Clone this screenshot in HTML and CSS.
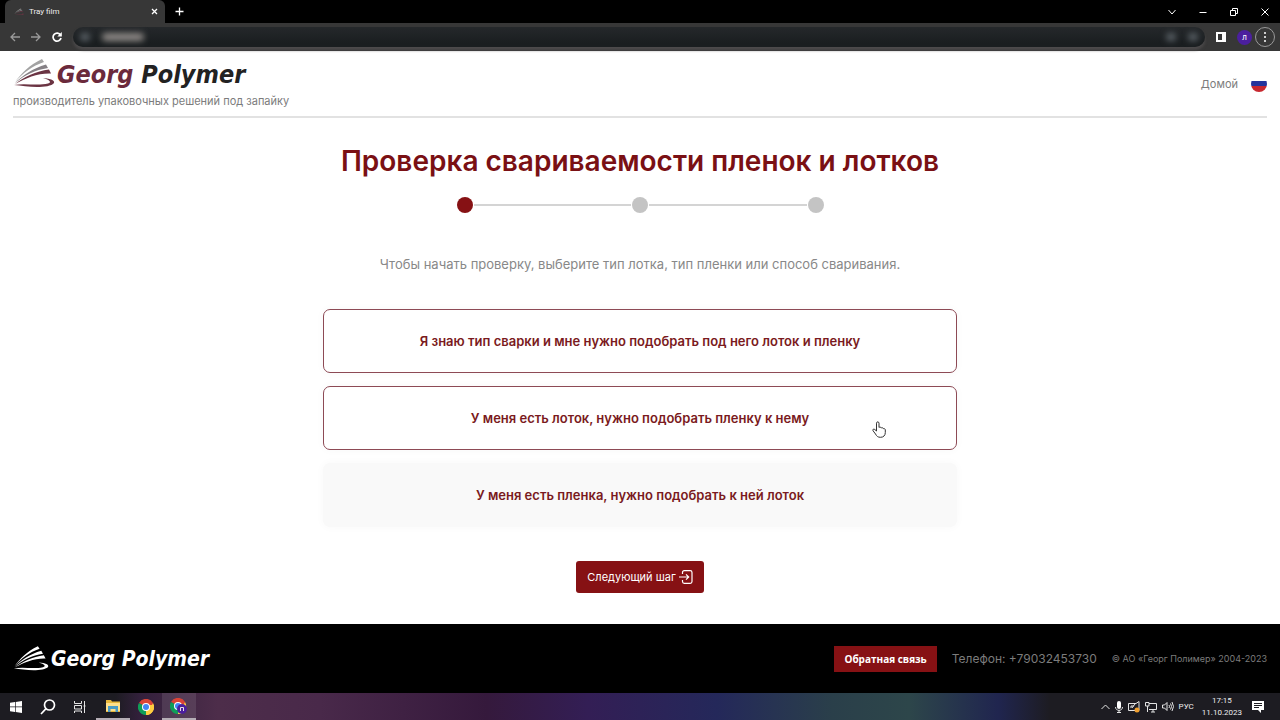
FILE: index.html
```html
<!DOCTYPE html>
<html lang="ru">
<head>
  <meta charset="UTF-8">
  <meta name="viewport" content="width=device-width, initial-scale=1.0">
  <title>Tray film</title>
  <link rel="stylesheet" href="styles.css">
</head>
<body>

  <!-- Logo shape, shared by header, footer and tab -->
  <svg class="defs" width="0" height="0" aria-hidden="true">
    <symbol id="mark" viewBox="0 0 42 30">
      <path class="m1" d="M2 23C8 15 16 6 29 0L31 3C19 7 10 14 2 23Z"/>
      <path class="m2" d="M2 24C9 17 20 9 33 5.500L35 9C22 11 12 16 2 24Z"/>
      <path class="m3" d="M2 25C11 18 23 12 36 10.500L38 14.500C25 14 13 19 2 25Z"/>
      <path class="m4" d="M1 26C12 24 25 27 35 24.500C39 23.500 37 21 30 19C38 19.500 42 21.500 41 24C39 27 31 28 24 28C16 28 8 26.500 1 26Z"/>
    </symbol>
  </svg>

  <!-- Browser window -->
  <div class="titlebar">
    <div class="tab">
      <svg class="mark-tab" width="10" height="8"><use href="#mark"/></svg>
      <span class="tab-name">Tray film</span>
      <button class="icon-btn" aria-label="Закрыть вкладку">
        <svg width="7" height="7" viewBox="0 0 7 7"><path d="M1 1L6 6M6 1L1 6"/></svg>
      </button>
    </div>
    <button class="icon-btn new-tab" aria-label="Новая вкладка">
      <svg width="9" height="9" viewBox="0 0 9 9"><path d="M4.500 .5V8.500M.5 4.500H8.500"/></svg>
    </button>
    <div class="window-buttons">
      <button class="icon-btn" aria-label="Поиск вкладок"><svg width="8" height="8" viewBox="0 0 8 8"><path class="thin" d="M.5 2L4 6L7.500 2"/></svg></button>
      <button class="icon-btn" aria-label="Свернуть"><svg width="8" height="8" viewBox="0 0 8 8"><path class="thin" d="M.5 4.500H7.500"/></svg></button>
      <button class="icon-btn" aria-label="Восстановить"><svg width="8" height="8" viewBox="0 0 8 8"><path class="thin" d="M.5 2.500H5.500V7.500H.5ZM2.500 2.500V.5H7.500V5.500H5.500"/></svg></button>
      <button class="icon-btn" aria-label="Закрыть"><svg width="8" height="8" viewBox="0 0 8 8"><path class="thin" d="M.5 .5L7.500 7.500M7.500 .5L.5 7.500"/></svg></button>
    </div>
  </div>

  <div class="toolbar">
    <button class="icon-btn dim" aria-label="Назад"><svg width="10" height="10" viewBox="0 0 10 10"><path d="M10 5H1M5 1L1 5L5 9"/></svg></button>
    <button class="icon-btn dim" aria-label="Вперед"><svg width="10" height="10" viewBox="0 0 10 10"><path d="M0 5H9M5 1L9 5L5 9"/></svg></button>
    <button class="icon-btn" aria-label="Обновить"><svg width="10" height="10" viewBox="0 0 10 10"><path class="bold" d="M8.500 3A4 4 0 1 0 9 6"/><path class="fill" d="M9.800 0V4.500H5.300Z"/></svg></button>
    <div class="address">
      <span class="smudge dot"></span>
      <span class="smudge url"></span>
      <span class="smudge dot right"></span>
      <span class="smudge dot"></span>
    </div>
    <button class="icon-btn" aria-label="Боковая панель"><svg width="10" height="10" viewBox="0 0 10 10"><path class="fill" fill-rule="evenodd" d="M0 0H10V10H0ZM2 2V8H6V2Z"/></svg></button>
    <button class="avatar" aria-label="Профиль">л</button>
    <button class="menu-btn" aria-label="Меню"><svg width="4" height="12" viewBox="0 0 4 12"><circle cx="2" cy="2" r="1"/><circle cx="2" cy="6" r="1"/><circle cx="2" cy="10" r="1"/></svg></button>
  </div>

  <!-- Site -->
  <header class="header">
    <div>
      <a href="#" class="logo">
        <svg class="mark" width="42" height="30"><use href="#mark"/></svg>
        <span class="logo-text"><span class="logo-georg">Georg</span> Polymer</span>
      </a>
      <p class="tagline">производитель упаковочных решений под запайку</p>
    </div>
    <nav class="nav">
      <a href="#">Домой</a>
      <button class="flag" aria-label="Русский язык"></button>
    </nav>
  </header>

  <main class="main">
    <h1>Проверка свариваемости пленок и лотков</h1>
    <div class="steps">
      <span class="step active"></span>
      <span class="line"></span>
      <span class="step"></span>
      <span class="line"></span>
      <span class="step"></span>
    </div>
    <p class="hint">Чтобы начать проверку, выберите тип лотка, тип пленки или способ сваривания.</p>
    <div class="options">
      <button class="option">Я знаю тип сварки и мне нужно подобрать под него лоток и пленку</button>
      <button class="option">У меня есть лоток, нужно подобрать пленку к нему
        <svg class="cursor" width="14" height="17" viewBox="0 0 14 17"><path d="M4.500 10V2.200C4.500 .4 7 .4 7 2.200V6.500C7.500 5.800 9 6 9.200 7C10 6.400 11.200 6.700 11.400 7.700C12.200 7.300 13.300 7.800 13.300 9V11.500C13.300 14.500 11.500 16.300 8.500 16.300C5.800 16.300 4.800 15.300 3.500 13L1 9.700C.3 8.500 1.700 7.500 2.800 8.500Z"/></svg>
      </button>
      <button class="option plain">У меня есть пленка, нужно подобрать к ней лоток</button>
    </div>
    <button class="next">
      Следующий шаг
      <svg width="14" height="14" viewBox="0 0 14 14"><path d="M3.500 4V2.500Q3.500 .7 5.300 .7H11.200Q13 .7 13 2.500V11.500Q13 13.300 11.200 13.300H5.300Q3.500 13.300 3.500 11.500V10M0 7H9.500M7 4.300L9.700 7L7 9.700"/></svg>
    </button>
  </main>

  <footer class="footer">
    <a href="#" class="logo logo-white">
      <svg class="mark" width="36" height="26"><use href="#mark"/></svg>
      <span class="logo-text">Georg Polymer</span>
    </a>
    <div class="contacts">
      <button class="feedback">Обратная связь</button>
      <span class="phone">Телефон: +79032453730</span>
      <span class="copy">© АО «Георг Полимер» 2004-2023</span>
    </div>
  </footer>

  <!-- Windows taskbar -->
  <div class="taskbar">
    <button class="task" aria-label="Пуск"><svg width="12" height="12" viewBox="0 0 12 12"><path class="fill" d="M0 1.800L5 1.100V5.600H0ZM5.700 1L12 0V5.600H5.700ZM0 6.300H5V10.900L0 10.200ZM5.700 6.300H12V12L5.700 11Z"/></svg></button>
    <button class="task" aria-label="Поиск"><svg width="16" height="16" viewBox="0 0 16 16"><circle class="stroke" cx="9.500" cy="6" r="5"/><path class="stroke" d="M6 9.700L1 15"/></svg></button>
    <button class="task" aria-label="Представление задач"><svg width="12" height="12" viewBox="0 0 12 12"><path class="line-icon" d="M.5 0V2.500H7.500V0M.5 4.500H7.500V8H.5ZM.5 12V10H7.500V12M10.500 0V12M9.500 5H11.500"/></svg></button>
    <button class="task open" aria-label="Проводник"><svg width="14" height="12" viewBox="0 0 14 12"><path fill="#e8b83c" d="M0 0H5L6 1.500H14V12H0Z"/><path fill="#ffe08a" d="M0 3H14V11H0Z"/><path fill="#4a9bc4" d="M2 6H12V12H9.500V9H4.500V12H2Z"/></svg></button>
    <button class="task" aria-label="Chrome">
      <svg width="16" height="16" viewBox="0 0 16 16"><g id="chrome"><path fill="#db4437" d="M8 8L1 4A8 8 0 0 1 15 4Z"/><path fill="#ffcd40" d="M8 8L15 4A8 8 0 0 1 8 16Z"/><path fill="#0f9d58" d="M8 8L8 16A8 8 0 0 1 1 4Z"/><path fill="#db4437" d="M8 4H15L13 8H8Z"/><path fill="#ffcd40" d="M11.500 6H15.700A8 8 0 0 1 8 16L11.500 10Z"/><circle cx="8" cy="8" r="4" fill="#fff"/><circle cx="8" cy="8" r="3" fill="#4285f4"/></g></svg>
    </button>
    <button class="task open current" aria-label="Tray film">
      <svg width="18" height="16" viewBox="0 0 18 16"><use href="#chrome"/><circle cx="12" cy="11" r="5" fill="#4b1f9e"/><path class="line-icon" d="M10.500 13V9.500H13.500V13"/></svg>
    </button>

    <div class="tray">
      <svg width="9" height="6" viewBox="0 0 9 6"><path class="line-icon" d="M.5 5L4.500 1L8.500 5"/></svg>
      <svg width="8" height="12" viewBox="0 0 8 12"><rect class="fill" x="2" y="0" width="4" height="8" rx="2"/><path class="line-icon" d="M.5 6C.5 10.500 7.500 10.500 7.500 6M4 9V12M2 11.500H6"/></svg>
      <svg width="12" height="12" viewBox="0 0 12 12"><path class="line-icon" d="M.5 2.500H8L11 .5V9.500H.5ZM3 7V5H6M7 3L4 7"/><circle cx="9" cy="9" r="2.500" fill="#f0a030"/></svg>
      <svg width="12" height="12" viewBox="0 0 12 12"><path class="line-icon" d="M4 2.500H11.500V8.500H4M6 11H10M8 8.500V11M.5 1.500H4V5H.5ZM2.500 5V11"/></svg>
      <svg width="12" height="11" viewBox="0 0 12 11"><path class="line-icon" d="M.5 4H2.500L5 1.500V9.500L2.500 7H.5ZM7 4Q8 5.500 7 7M8.500 2.500Q10.500 5.500 8.500 8.500M10 1Q13 5.500 10 10"/></svg>
      <span class="lang">РУС</span>
      <div class="clock">
        <time>17:15</time>
        <time>11.10.2023</time>
      </div>
      <svg class="notes" width="12" height="12" viewBox="0 0 12 12"><path class="fill" d="M0 0H12V9H9V12L6 9H0Z"/><path stroke="#1d1c22" d="M2 2.500H10M2 4.500H10M2 6.500H7"/></svg>
    </div>
  </div>

</body>
</html>
```
FILE: styles.css
```css
* {
  box-sizing: border-box;
}

body {
  margin: 0;
  min-height: 100vh;
  display: flex;
  flex-direction: column;
  background-color: #fff;
  font-family: Inter, sans-serif;
}

button {
  border: none;
  padding: 0;
  background: none;
  font-family: inherit;
  cursor: pointer;
}

a {
  color: inherit;
  text-decoration: none;
}

h1, p {
  margin: 0;
}

svg {
  display: block;
  flex-shrink: 0;
}

.defs {
  position: absolute;
}

/* Browser window */
.titlebar {
  display: flex;
  align-items: center;
  height: 23px;
  background-color: #000;
}

.tab {
  display: flex;
  align-items: center;
  align-self: stretch;
  width: 160px;
  margin-left: 5px;
  padding: 0 7px 0 9px;
  border-radius: 6px 6px 0 0;
  background-color: #373737;
}

.mark-tab {
  fill: #a0616c;
}

.tab-name {
  flex: 1;
  margin-left: 5px;
  color: #eee;
  font-family: Roboto, sans-serif;
  font-size: 8px;
}

.icon-btn path {
  fill: none;
  stroke: #fff;
  stroke-width: 1.3;
}

.icon-btn .thin {
  stroke-width: 1;
}

.icon-btn .bold {
  stroke-width: 1.7;
}

.icon-btn .fill {
  fill: #fff;
  stroke: none;
}

.icon-btn.dim path {
  stroke: #999;
}

.new-tab {
  margin-left: 10px;
}

.window-buttons {
  display: flex;
  gap: 23px;
  margin-left: auto;
  padding: 0 11px;
}

.toolbar {
  display: flex;
  align-items: center;
  gap: 11px;
  height: 28px;
  padding: 0 5px 0 10px;
  background-color: #373737;
}

.address {
  flex: 1;
  display: flex;
  align-items: center;
  gap: 12px;
  height: 20px;
  padding: 0 7px;
  border-radius: 10px;
  background: linear-gradient(#25282b, #1a1e20 80%);
  box-shadow: 0 3px 3px #4d4b4c;
}

.smudge {
  height: 8px;
  border-radius: 4px;
  background-color: #8f8a87;
  filter: blur(3px);
}

.dot {
  width: 10px;
  background-color: #5a6167;
}

.url {
  width: 42px;
}

.right {
  margin-left: auto;
}

.avatar {
  width: 15px;
  height: 15px;
  border-radius: 50%;
  background-color: #4b1f9e;
  color: #fff;
  font-size: 8px;
}

.menu-btn {
  display: flex;
  align-items: center;
  justify-content: center;
  width: 20px;
  height: 20px;
  margin-left: -8px;
  border: 1px solid #999;
  border-radius: 50%;
  fill: #fff;
}

/* Header */
.header {
  display: flex;
  justify-content: space-between;
  align-items: center;
  height: 67px;
  margin: 0 13px;
  border-bottom: 2px solid #e2e2e2;
}

.logo {
  display: flex;
  align-items: flex-start;
  gap: 2px;
  height: 34px;
  color: #222;
  font-family: "DejaVu Sans Condensed", "DejaVu Sans", sans-serif;
  font-size: 25px;
  font-weight: 700;
  font-style: italic;
  line-height: 32px;
}

.logo-georg {
  color: #6b2a3c;
}

.m1 {
  fill: var(--mark-1, #a3a3a3);
}

.m2 {
  fill: var(--mark-2, #858085);
}

.m3, .m4 {
  fill: var(--mark-3, #6b3443);
}

.tagline {
  color: #7c7c7c;
  font-size: 11px;
  line-height: 16px;
}

.nav {
  display: flex;
  align-items: center;
  gap: 13px;
  color: #7c7c7c;
  font-size: 11px;
}

.flag {
  width: 16px;
  height: 16px;
  border-radius: 50%;
  background: linear-gradient(#fff 5px, #24349c 5px, #24349c 10px, #c8282f 10px);
}

/* Main */
.main {
  flex: 1;
  display: flex;
  flex-direction: column;
  align-items: center;
  padding: 22px 16px 0;
}

h1 {
  color: #7a1014;
  font-size: 28px;
  font-weight: 600;
  line-height: 42px;
  text-align: center;
}

.steps {
  display: flex;
  align-items: center;
  width: 100%;
  max-width: 367px;
  height: 16px;
  margin-top: 15px;
}

.step {
  width: 16px;
  height: 16px;
  border-radius: 50%;
  background-color: #c4c4c4;
}

.step.active {
  background-color: #861114;
}

.line {
  flex: 1;
  height: 2px;
  margin: 0 1px;
  background-color: #d4d4d4;
}

.hint {
  margin-top: 41px;
  color: #888;
  font-size: 13px;
  font-weight: 400;
  line-height: 20px;
  text-align: center;
}

.options {
  display: grid;
  gap: 13px;
  width: 100%;
  max-width: 634px;
  margin-top: 35px;
}

.option {
  position: relative;
  min-height: 64px;
  border: 1px solid #8d4a55;
  border-radius: 7px;
  background-color: #fff;
  box-shadow: 0 0 10px rgba(0, 0, 0, 0.03);
  color: #7a1a20;
  font-size: 13px;
  font-weight: 600;
}

.option.plain {
  border-color: transparent;
  background-color: #f9f9f9;
}

.cursor {
  position: absolute;
  right: 70px;
  bottom: 11px;
  fill: #fff;
  stroke: #333;
}

.next {
  display: flex;
  align-items: center;
  gap: 3px;
  height: 32px;
  margin: 34px 0 30px;
  padding: 0 11px;
  border-radius: 3px;
  background-color: #861114;
  color: #fff;
  font-size: 11px;
}

.next path {
  fill: none;
  stroke: #fff;
  stroke-width: 1.2;
}

/* Footer */
.footer {
  display: flex;
  justify-content: space-between;
  align-items: center;
  height: 69px;
  padding: 0 13px;
  background-color: #000;
}

.logo-white {
  --mark-1: #fff;
  --mark-2: #fff;
  --mark-3: #fff;
  align-items: center;
  color: #fff;
  font-size: 21px;
}

.contacts {
  display: flex;
  align-items: center;
  gap: 15px;
  color: #7c7c7c;
}

.feedback {
  height: 26px;
  padding: 0 10px;
  background-color: #861114;
  color: #fff;
  font-family: "Open Sans", sans-serif;
  font-size: 10px;
  font-weight: 700;
}

.phone {
  font-size: 12px;
}

.copy {
  font-size: 9px;
}

/* Taskbar */
.taskbar {
  display: flex;
  align-items: stretch;
  height: 27px;
  background: linear-gradient(90deg, #1d1c22 9%, #33203c 11%, #4d2d4a 17%, #49294a 25%, #35193c 38%, #331e55 46%, #24285a 56%, #2a3f4a 65%, #2d464a 71%, #20254f 78%, #1d1c22 82%);
}

.task {
  display: flex;
  align-items: center;
  justify-content: center;
  width: 32px;
}

.task.open {
  width: 34px;
  border-bottom: 2px solid #b5adb5;
}

.task.current {
  background-color: rgba(255, 255, 255, 0.1);
}

.taskbar .fill {
  fill: #fff;
}

.stroke {
  fill: none;
  stroke: #fff;
  stroke-width: 1.7;
}

.line-icon {
  fill: none;
  stroke: #e4e4e4;
}

.tray {
  display: flex;
  align-items: center;
  gap: 5px;
  margin-left: auto;
  padding-right: 16px;
  color: #eee;
  font-family: Roboto, sans-serif;
  font-size: 8px;
}

.clock {
  display: flex;
  flex-direction: column;
  align-items: center;
  margin-left: 3px;
  line-height: 12px;
}

.notes {
  margin-left: 5px;
}
```
